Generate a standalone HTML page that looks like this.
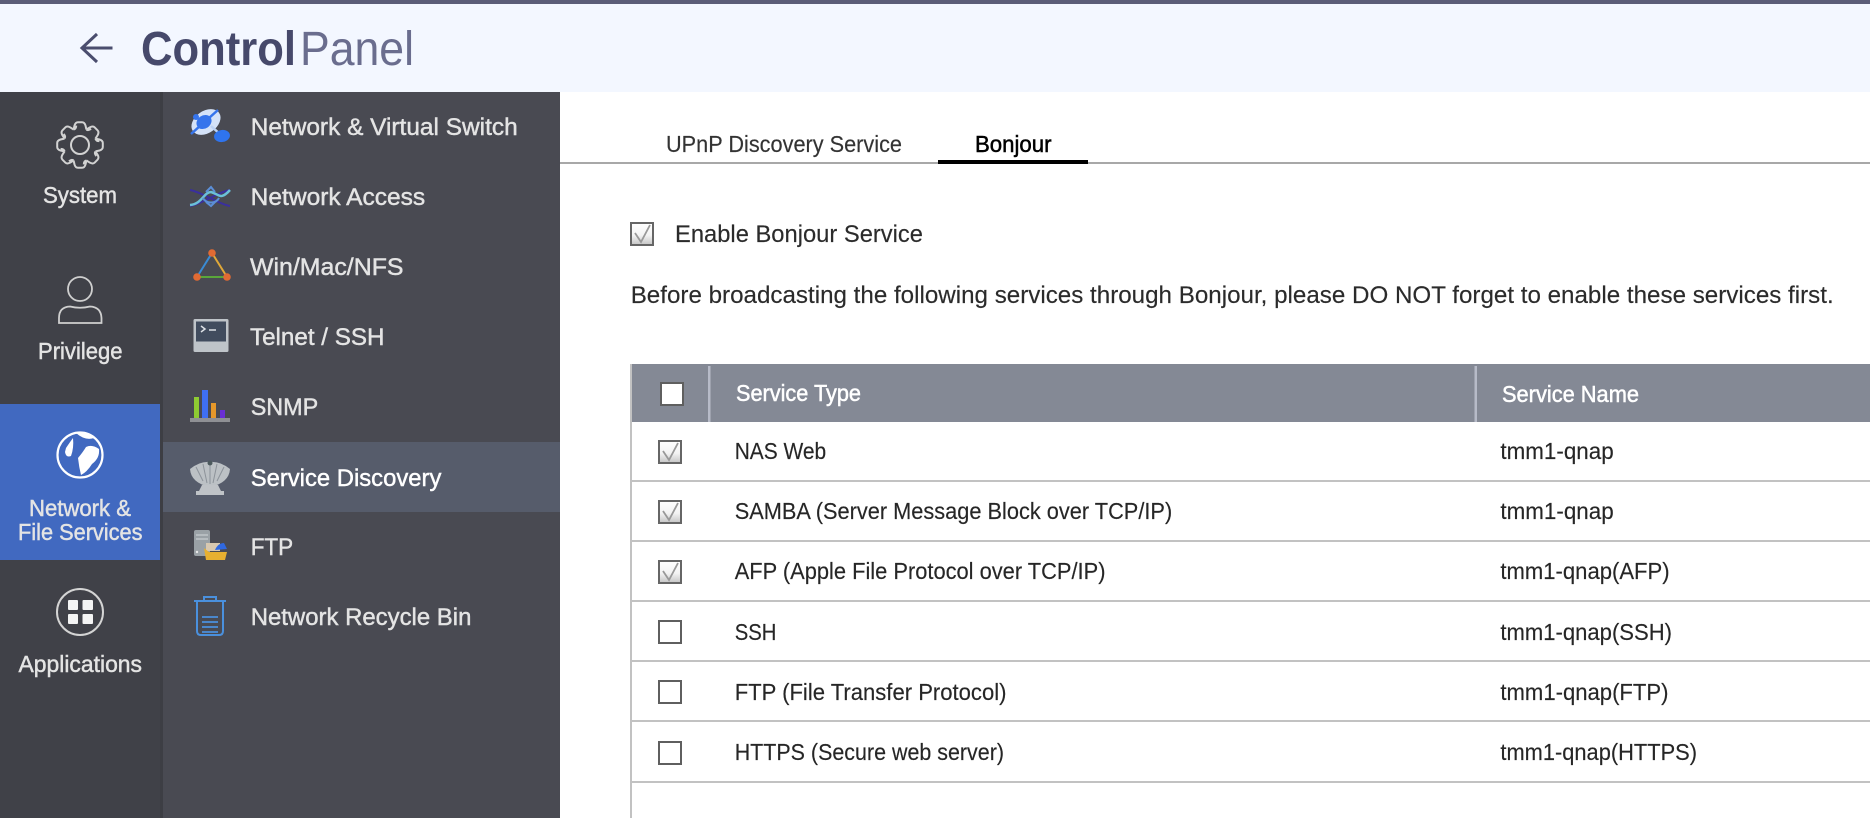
<!DOCTYPE html>
<html><head><meta charset="utf-8"><title>ControlPanel</title>
<style>
html,body{margin:0;padding:0;background:#fff;overflow:hidden}
svg{display:block;filter:blur(.35px)}
text{font-family:"Liberation Sans",sans-serif}
.n{font-size:24.5px;fill:#e4e4e4;stroke:#e4e4e4;stroke-width:.45px}
.a{fill:#fff;stroke:#fff}
.c{font-size:23px;fill:#e4e4e4;stroke:#e4e4e4;stroke-width:.45px}
.b{font-size:24.5px;fill:#2b2b2b;stroke:#2b2b2b;stroke-width:.15px}
.h{font-size:23.5px;fill:#fff;stroke:#fff;stroke-width:.5px}
.r{font-size:23px;fill:#262626;stroke:#262626;stroke-width:.15px}
.ln{fill:#c2c2c2}
</style></head><body>
<svg xmlns="http://www.w3.org/2000/svg" width="1870" height="818" viewBox="0 0 1870 818">
<defs>
<linearGradient id="cbg" x1="0" y1="0" x2="0" y2="1"><stop offset="0" stop-color="#fff"/><stop offset=".55" stop-color="#f4f4f4"/><stop offset="1" stop-color="#c4c4c4"/></linearGradient>
<g id="chk"><rect x="1" y="1" width="22" height="22" fill="url(#cbg)" stroke="#666" stroke-width="2"/><path d="M5 11 L11 20 L20 3" fill="none" stroke="#999" stroke-width="1.800"/></g>
<g id="unc"><rect x="1" y="1" width="22" height="22" fill="#fff" stroke="#5f5f5f" stroke-width="2"/></g>
<path id="tooth" d="M-6.400-15.500 L-5.500-19.500 Q-4.500-22.800-2-22.800 L2-22.800 Q4.500-22.800 5.500-19.500 L6.400-15.500" fill="none" stroke="#d2d2d2" stroke-width="2"/>
<path id="gap" d="M6.400-15.500 Q8.500-14 11-16.400" fill="none" stroke="#d2d2d2" stroke-width="2"/>
</defs>

<!-- header -->
<rect width="1870" height="92" fill="#f3f7ff"/>
<rect width="1870" height="4" fill="#5b5d78"/>
<path d="M97 34 L82 48 L97 62 M82 48 H112.500" fill="none" stroke="#4a4d6e" stroke-width="3"/>
<text x="141" y="65" font-size="48" font-weight="bold" fill="#46496b" textLength="155" lengthAdjust="spacingAndGlyphs">Control</text>
<text x="300" y="65" font-size="48" fill="#6a6d8e" textLength="114" lengthAdjust="spacingAndGlyphs">Panel</text>

<!-- sidebars -->
<rect x="0" y="92" width="162" height="726" fill="#404148"/>
<rect x="160" y="92" width="3" height="726" fill="#3d3e44"/>
<rect x="163" y="92" width="397" height="726" fill="#494a52"/>
<rect x="0" y="404" width="160" height="156" fill="#4169c0"/>
<rect x="163" y="442" width="397" height="70" fill="#565c6b"/>

<!-- col 1 icons -->
<g transform="translate(80 145)">
<use href="#tooth"/><use href="#gap"/>
<g transform="rotate(45)"><use href="#tooth"/><use href="#gap"/></g>
<g transform="rotate(90)"><use href="#tooth"/><use href="#gap"/></g>
<g transform="rotate(135)"><use href="#tooth"/><use href="#gap"/></g>
<g transform="rotate(180)"><use href="#tooth"/><use href="#gap"/></g>
<g transform="rotate(225)"><use href="#tooth"/><use href="#gap"/></g>
<g transform="rotate(270)"><use href="#tooth"/><use href="#gap"/></g>
<g transform="rotate(315)"><use href="#tooth"/><use href="#gap"/></g>
<circle r="9" fill="none" stroke="#d2d2d2" stroke-width="2"/>
</g>
<ellipse cx="80" cy="289" rx="12" ry="12" fill="none" stroke="#cfcfcf" stroke-width="1.800"/>
<path d="M59 323 V318 Q59 307 70 306.500 Q80 309 90 306.500 Q101 307 101.500 318 V323 Z" fill="none" stroke="#cfcfcf" stroke-width="1.800"/>
<circle cx="80" cy="455" r="22.500" fill="none" stroke="#fff" stroke-width="2.200"/>
<path d="M78 458 Q83 452 86 447 Q92 444 99 449 Q100 458 92 464 Q87 472 81 475 Q79 467 78 458Z M66 448 Q70 442 73 438 Q74 448 71 456 Q66 458 65 452Z M76 433 Q88 430 94 438 Q85 441 76 433Z" fill="#fff"/>
<circle cx="80" cy="612" r="23" fill="none" stroke="#d4d4d4" stroke-width="2"/>
<g fill="#f4f4f4"><rect x="68" y="600" width="10" height="10" rx="1"/><rect x="82.500" y="600" width="10.500" height="10" rx="1"/><rect x="68" y="614" width="10" height="10" rx="1"/><rect x="82.500" y="614" width="10.500" height="10" rx="1"/></g>

<!-- col 1 labels -->
<text class="c" x="43" y="203" textLength="74" lengthAdjust="spacingAndGlyphs">System</text>
<text class="c" x="38" y="359" textLength="84.500" lengthAdjust="spacingAndGlyphs">Privilege</text>
<text class="c a" x="29" y="516" textLength="102" lengthAdjust="spacingAndGlyphs">Network &amp;</text>
<text class="c a" x="18" y="540" textLength="124.500" lengthAdjust="spacingAndGlyphs">File Services</text>
<text class="c" x="18.500" y="672" textLength="123.500" lengthAdjust="spacingAndGlyphs">Applications</text>

<!-- col 2 icons -->
<g>
<ellipse cx="206" cy="122" rx="16" ry="11" transform="rotate(-35 206 122)" fill="#d4e2f8"/>
<ellipse cx="204" cy="122" rx="8" ry="6.500" transform="rotate(-35 204 122)" fill="#3574ec"/>
<path d="M191 134 L218 110" stroke="#3574ec" stroke-width="2.500"/>
<circle cx="196" cy="117" r="3" fill="#3574ec"/>
<path d="M211 126 L222 136" stroke="#bcd2f4" stroke-width="2.500"/>
<ellipse cx="222" cy="136" rx="8" ry="6" transform="rotate(-10 222 136)" fill="#2f74ee"/>
</g>
<g fill="none">
<path d="M190 190 C202 192 218 204 230 206 M190 206 C202 204 218 192 230 190" stroke="#3a2f9e" stroke-width="2"/>
<path d="M190 205 C202 204 204 192 211 192 C219 194 220 201 230 190" stroke="#6bc0d8" stroke-width="2.500"/>
<path d="M206 192 L211 187 L215 192 M206 202 L211 206 L215 202" stroke="#5b8fd8" stroke-width="2"/>
<path d="M203 198 C206 204 216 204 219 198" stroke="#5b8fd8" stroke-width="2"/>
</g>
<path d="M212 253 L197 277" stroke="#3a8bd4" stroke-width="2"/>
<path d="M212 253 L227 277" stroke="#e0a838" stroke-width="2"/>
<path d="M197 277 H227" stroke="#5aa63a" stroke-width="2"/>
<g fill="#e06a33"><circle cx="212" cy="253" r="3.800"/><circle cx="197" cy="277" r="3.800"/><circle cx="227" cy="277" r="3.800"/></g>
<rect x="193.500" y="319" width="35" height="33" rx="1.500" fill="#bfc4c9"/>
<rect x="196" y="321.500" width="30" height="20" fill="#414c5e"/>
<path d="M201 326 L205 329 L201 332 M209 330 H216" fill="none" stroke="#dde1e6" stroke-width="1.500"/>
<rect x="190" y="418" width="40" height="4" fill="#8f9094"/>
<rect x="194" y="397" width="5" height="21" fill="#8ecb32"/>
<rect x="202" y="390" width="6" height="28" fill="#3f6ff2"/>
<rect x="211" y="403" width="5" height="15" fill="#e6982a"/>
<rect x="220" y="410" width="5" height="8" fill="#6a2fd6"/>
<path d="M190 469 Q200 461 210 462 Q220 461 230 469 Q229 483 210 487 Q191 483 190 469Z" fill="#bcc1c5"/>
<path d="M210 463 V484 M203 464 L207 483 M217 464 L213 483 M196 467 L203 481 M224 467 L217 481" stroke="#8d939a" stroke-width="1" fill="none"/>
<circle cx="210" cy="463" r="2.500" fill="#4d5a5e"/>
<path d="M202 485 L199 491 H221 L218 485 Z M196 491 H224 V495 H196Z" fill="#bfc3c7"/>
<rect x="194" y="530" width="16" height="26" rx="2" fill="#9aa1a6"/>
<path d="M196 535 H208 M196 539 H208" stroke="#bfc5c9" stroke-width="1.500"/>
<circle cx="197" cy="552" r="1.200" fill="#e8e8e8"/>
<rect x="206" y="543" width="14" height="8" fill="#d8c8b0"/>
<path d="M204 548 L209 552 H227 L225 560 H206 Z" fill="#e8b030"/>
<path d="M215 550 Q218 543 224 543 L227 549 Z" fill="#2f68e0"/>
<g fill="none" stroke="#4a90dd" stroke-width="2">
<path d="M194 601 H226"/><path d="M204 601 V597 H216 V601"/>
<path d="M197 601 V631 Q197 635 201 635 H219 Q223 635 223 631 V601"/>
</g>
<path d="M202 617 H218 M202 622 H218 M202 627 H218 M202 632 H218" stroke="#4a90dd" stroke-width="1.800"/>

<!-- col 2 labels -->
<text class="n" x="250.700" y="135" textLength="267" lengthAdjust="spacingAndGlyphs">Network &amp; Virtual Switch</text>
<text class="n" x="250.700" y="205" textLength="174.500" lengthAdjust="spacingAndGlyphs">Network Access</text>
<text class="n" x="250" y="275" textLength="153.500" lengthAdjust="spacingAndGlyphs">Win/Mac/NFS</text>
<text class="n" x="250" y="345" textLength="134.500" lengthAdjust="spacingAndGlyphs">Telnet / SSH</text>
<text class="n" x="250.700" y="415" textLength="67.500" lengthAdjust="spacingAndGlyphs">SNMP</text>
<text class="n a" x="250.700" y="486" textLength="190.700" lengthAdjust="spacingAndGlyphs">Service Discovery</text>
<text class="n" x="250.700" y="555" textLength="42.500" lengthAdjust="spacingAndGlyphs">FTP</text>
<text class="n" x="250.700" y="625" textLength="220.700" lengthAdjust="spacingAndGlyphs">Network Recycle Bin</text>

<!-- tabs -->
<rect x="560" y="162" width="1310" height="2" fill="#a8a8a8"/>
<rect x="938" y="160" width="150" height="4" fill="#000"/>
<text x="666" y="152" font-size="23" fill="#333" stroke="#333" stroke-width=".15" textLength="236" lengthAdjust="spacingAndGlyphs">UPnP Discovery Service</text>
<text x="975" y="152" font-size="23" fill="#000" stroke="#000" stroke-width=".5" textLength="76.500" lengthAdjust="spacingAndGlyphs">Bonjour</text>

<!-- enable -->
<use href="#chk" x="630" y="222"/>
<text class="b" x="675" y="242" textLength="248" lengthAdjust="spacingAndGlyphs">Enable Bonjour Service</text>
<text class="b" x="630.700" y="303" textLength="1203" lengthAdjust="spacingAndGlyphs">Before broadcasting the following services through Bonjour, please DO NOT forget to enable these services first.</text>

<!-- table -->
<rect x="630" y="364" width="2" height="454" fill="#c2c2c2"/>
<rect x="632" y="364" width="1238" height="58" fill="#848995"/>
<rect x="708" y="366" width="2.500" height="56" fill="#b7bbc8"/>
<rect x="1474.500" y="366" width="2.500" height="56" fill="#b7bbc8"/>
<use href="#unc" x="660" y="382"/>
<text class="h" x="736" y="401" textLength="125" lengthAdjust="spacingAndGlyphs">Service Type</text>
<text class="h" x="1502" y="402" textLength="137" lengthAdjust="spacingAndGlyphs">Service Name</text>

<rect class="ln" x="632" y="480" width="1238" height="2"/>
<rect class="ln" x="632" y="540" width="1238" height="2"/>
<rect class="ln" x="632" y="600" width="1238" height="2"/>
<rect class="ln" x="632" y="660" width="1238" height="2"/>
<rect class="ln" x="632" y="720" width="1238" height="2"/>
<rect class="ln" x="632" y="781" width="1238" height="2"/>

<use href="#chk" x="658" y="440"/>
<use href="#chk" x="658" y="500"/>
<use href="#chk" x="658" y="560"/>
<use href="#unc" x="658" y="620"/>
<use href="#unc" x="658" y="680"/>
<use href="#unc" x="658" y="741"/>

<text class="r" x="734.700" y="459" textLength="91.500" lengthAdjust="spacingAndGlyphs">NAS Web</text>
<text class="r" x="734.700" y="519" textLength="437.500" lengthAdjust="spacingAndGlyphs">SAMBA (Server Message Block over TCP/IP)</text>
<text class="r" x="734.700" y="579" textLength="370.800" lengthAdjust="spacingAndGlyphs">AFP (Apple File Protocol over TCP/IP)</text>
<text class="r" x="734.700" y="640" textLength="41.700" lengthAdjust="spacingAndGlyphs">SSH</text>
<text class="r" x="734.700" y="700" textLength="271.800" lengthAdjust="spacingAndGlyphs">FTP (File Transfer Protocol)</text>
<text class="r" x="734.700" y="760" textLength="269.300" lengthAdjust="spacingAndGlyphs">HTTPS (Secure web server)</text>

<text class="r" x="1500.400" y="459" textLength="113.300" lengthAdjust="spacingAndGlyphs">tmm1-qnap</text>
<text class="r" x="1500.400" y="519" textLength="113.300" lengthAdjust="spacingAndGlyphs">tmm1-qnap</text>
<text class="r" x="1500.400" y="579" textLength="169.200" lengthAdjust="spacingAndGlyphs">tmm1-qnap(AFP)</text>
<text class="r" x="1500.400" y="640" textLength="171.600" lengthAdjust="spacingAndGlyphs">tmm1-qnap(SSH)</text>
<text class="r" x="1500.400" y="700" textLength="168.100" lengthAdjust="spacingAndGlyphs">tmm1-qnap(FTP)</text>
<text class="r" x="1500.400" y="760" textLength="196.600" lengthAdjust="spacingAndGlyphs">tmm1-qnap(HTTPS)</text>
</svg>
</body></html>
